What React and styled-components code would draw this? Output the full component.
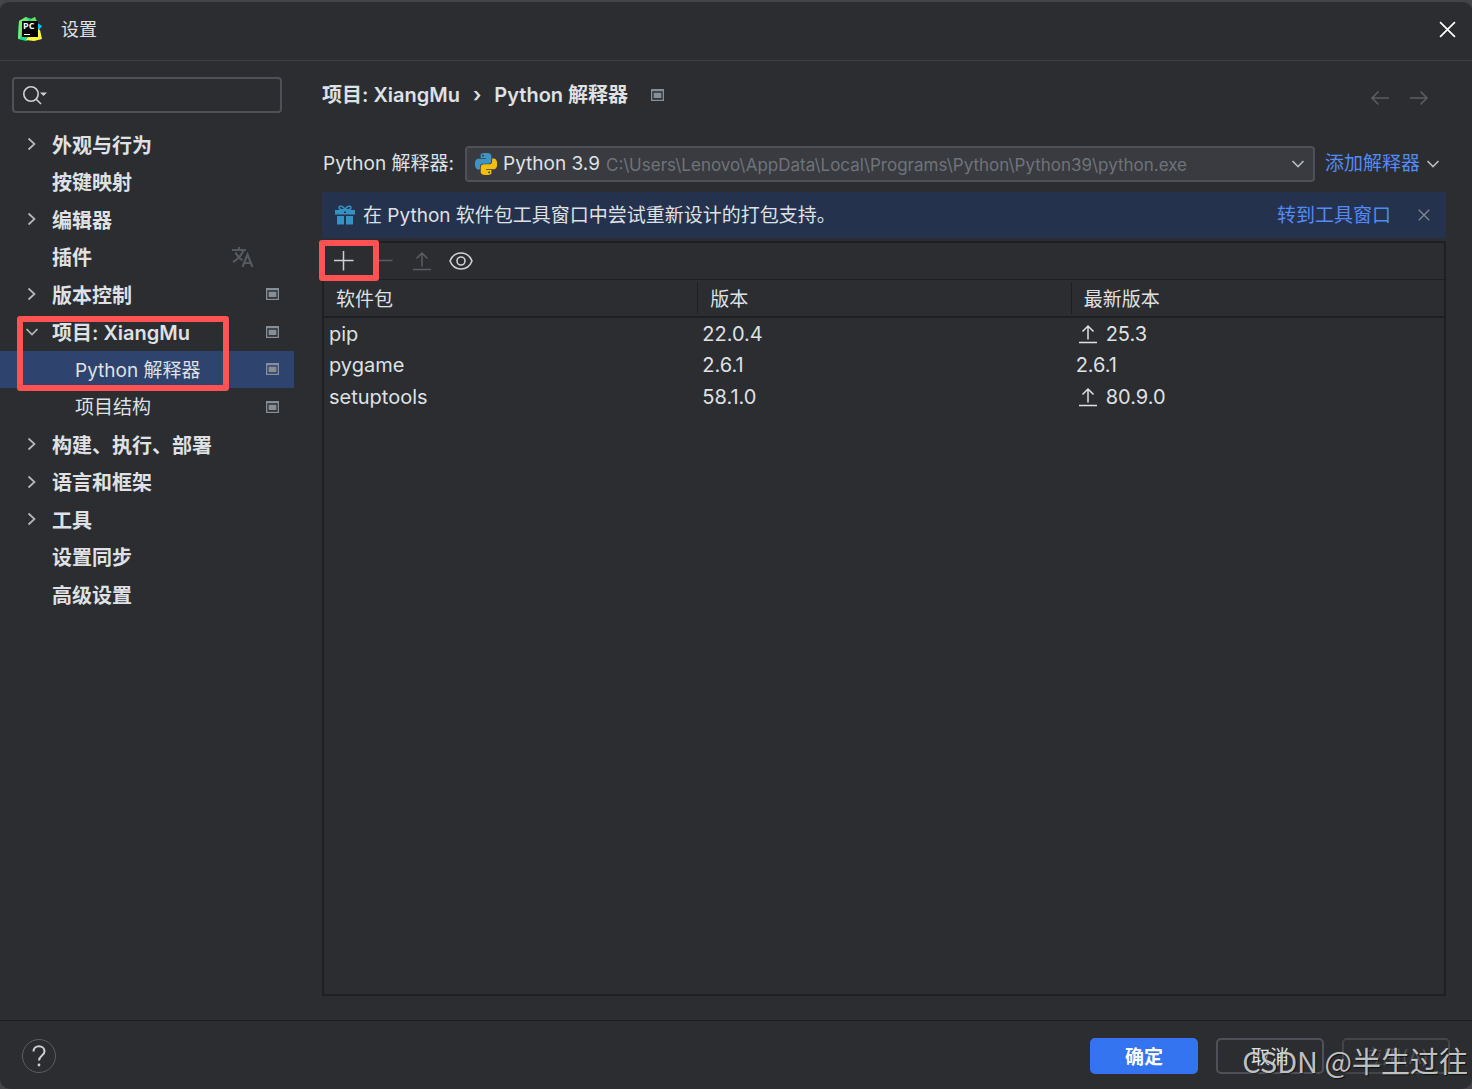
import { useState } from "react";
import styled, { createGlobalStyle } from "styled-components";

const GlobalStyle = createGlobalStyle`
  * {
    box-sizing: border-box;
  }
  body {
    margin: 0;
    background: #43454a;
    color: #dfe1e5;
    font-family: Inter, "Noto Sans CJK SC", sans-serif;
    font-size: 19px;
    line-height: 24px;
  }
  button, input, select {
    font: inherit;
    color: inherit;
  }
  button {
    padding: 0;
    border: 0;
    background: none;
  }
  svg {
    display: block;
    flex: none;
  }
`;

const Window = styled.div`
  position: relative;
  min-height: 100vh;
  display: flex;
  flex-direction: column;
  overflow: hidden;
  background: #2b2d30;
  border-top: 2px solid #43454a;
  border-radius: 10px;
`;

const TitleBar = styled.header`
  height: 59px;
  padding: 0 16px 4px 18px;
  display: flex;
  align-items: center;
  gap: 19px;
  border-bottom: 1px solid #3c3e42;
`;
const Title = styled.h1`
  flex: 1;
  margin: 0;
  padding-top: 2px;
  font-size: 18px;
  font-weight: 400;
`;

const Body = styled.div`
  flex: 1;
  display: grid;
  grid-template-columns: 294px 1fr;
`;

const Sidebar = styled.aside`
  position: relative;
  padding-top: 16px;
`;
const SearchBox = styled.label`
  height: 36px;
  margin: 0 12px 13px;
  padding-left: 9px;
  display: flex;
  align-items: center;
  border: 2px solid #4e5157;
  border-radius: 4px;
`;
const SearchInput = styled.input`
  flex: 1;
  min-width: 0;
  border: 0;
  outline: 0;
  background: none;
`;
const Tree = styled.ul`
  margin: 0;
  padding: 0;
  list-style: none;
`;
const TreeItem = styled.li`
  height: 37px;
  background: ${(props) => (props.$selected ? "#2e436e" : "none")};
  &:nth-child(even) {
    height: 38px;
  }
`;
const TreeButton = styled.button`
  width: 100%;
  height: 100%;
  padding: 0 15px 1px 25px;
  display: flex;
  align-items: center;
  text-align: left;
  font-size: ${(props) => (props.$child ? "19px" : "20px")};
  font-weight: ${(props) => (props.$child ? 400 : 600)};
`;
const ArrowSlot = styled.span`
  width: ${(props) => (props.$child ? "50px" : "27px")};
`;
const TreeLabel = styled.span`
  flex: 1;
  padding-top: 3px;
  white-space: nowrap;
`;
const TranslateSlot = styled.span`
  margin-right: 25px;
`;

// red marker frames drawn over the dialog
const Marker = styled.div`
  position: absolute;
  border: 6px solid #ff5252;
  border-radius: 3px;
  pointer-events: none;
`;
const TreeMarker = styled(Marker)`
  top: 255px;
  left: 17px;
  width: 212px;
  height: 75px;
`;
const AddMarker = styled(Marker)`
  top: -3px;
  left: -5px;
  width: 60px;
  height: 41px;
`;

const Main = styled.main`
  min-width: 0;
  padding: 0 26px 24px 28px;
  display: flex;
  flex-direction: column;
`;
const Breadcrumbs = styled.div`
  height: 68px;
  margin-bottom: 17px;
  padding-right: 17px;
  display: flex;
  align-items: center;
  font-size: 20px;
  font-weight: 600;
`;
const Crumb = styled.span`
  white-space: nowrap;
`;
const CrumbArrow = styled.span`
  margin: 0 13px;
`;
const CrumbIcon = styled.span`
  flex: 1;
  margin-left: 23px;
`;
const NavButtons = styled.div`
  display: flex;
  gap: 19px;
  padding-top: 6px;
`;

const InterpreterRow = styled.div`
  height: 36px;
  margin-bottom: 10px;
  display: flex;
  align-items: center;
`;
const InterpreterLabel = styled.label`
  width: 143px;
  padding-left: 1px;
  white-space: nowrap;
`;
const Combo = styled.div`
  flex: 1;
  min-width: 0;
  height: 36px;
  padding: 0 8px;
  display: flex;
  align-items: center;
  gap: 6px;
  background: #393b40;
  border: 2px solid #4e5157;
  border-radius: 4px;
`;
const ComboSelect = styled.select`
  padding: 0;
  border: 0;
  outline: 0;
  appearance: none;
  background: none;
  option {
    background: #2b2d30;
  }
`;
const ComboPath = styled.span`
  flex: 1;
  min-width: 0;
  padding-top: 2px;
  overflow: hidden;
  white-space: nowrap;
  color: #6f737a;
  font-size: 17px;
`;
const AddInterpreter = styled.button`
  width: 131px;
  padding-left: 10px;
  display: flex;
  align-items: center;
  gap: 6px;
  color: #548af7;
  white-space: nowrap;
`;

const Banner = styled.section`
  height: 46px;
  margin-bottom: 3px;
  padding: 0 16px 0 13px;
  display: flex;
  align-items: center;
  background: #25324d;
`;
const BannerText = styled.p`
  flex: 1;
  margin: 0 0 0 8px;
  padding-top: 2px;
`;
const BannerLink = styled.a`
  margin-right: 27px;
  padding-top: 2px;
  color: #548af7;
  text-decoration: none;
`;

const Panel = styled.section`
  flex: 1;
  border: 2px solid #1e1f22;
`;
const Toolbar = styled.div`
  position: relative;
  height: 37px;
  display: flex;
  align-items: center;
  border-bottom: 1px solid #1e1f22;
`;
const ToolButton = styled.button`
  width: 39px;
  height: 36px;
  display: flex;
  align-items: center;
  justify-content: center;
  color: ${(props) => (props.disabled ? "#5a5d63" : "#ced0d6")};
`;

const PackageTable = styled.table`
  width: 100%;
  table-layout: fixed;
  border-spacing: 0;
  text-align: left;
`;
const HeadCell = styled.th`
  height: 38px;
  padding: 0;
  border-bottom: 2px solid #1e1f22;
  font-weight: 400;
`;
const HeadLabel = styled.div`
  height: 32px;
  padding-left: 12px;
  line-height: 36px;
  border-left: ${(props) => (props.$first ? "0" : "1px solid #1e1f22")};
`;
const PackageRow = styled.tr`
  height: 31px;
  &:nth-child(odd) {
    height: 32px;
  }
`;
const Cell = styled.td`
  padding: 0 5px 1px;
  font-size: 20px;
`;
const Latest = styled.div`
  display: flex;
  align-items: center;
  gap: 6px;
`;

const Footer = styled.footer`
  height: 69px;
  padding: 2px 22px 0;
  display: flex;
  align-items: center;
  gap: 18px;
  border-top: 1px solid #1e1f22;
`;
const HelpButton = styled.button`
  width: 34px;
  height: 34px;
  margin-right: auto;
  display: flex;
  align-items: center;
  justify-content: center;
  border: 1px solid #5a5d63;
  border-radius: 50%;
`;
const DialogButton = styled.button`
  width: 108px;
  height: 36px;
  padding-top: 3px;
  border: 2px solid ${(props) => (props.$primary ? "#3574f0" : "#4e5157")};
  border-radius: 5px;
  background: ${(props) => (props.$primary ? "#3574f0" : "none")};
  color: ${(props) => (props.$primary ? "#ffffff" : "#dfe1e5")};
  font-weight: ${(props) => (props.$primary ? 600 : 400)};
  &:disabled {
    border-color: #43454a;
    color: #4e5157;
  }
`;
const Watermark = styled.div`
  position: absolute;
  right: 4px;
  bottom: 9px;
  color: rgba(215, 215, 215, 0.9);
  font-family: "Noto Sans CJK SC", sans-serif;
  font-size: 29px;
  line-height: 40px;
  text-shadow: 1px 1px 1px rgba(0, 0, 0, 0.6);
  white-space: nowrap;
  pointer-events: none;
`;

const PyCharmIcon = () => (
  <svg width="24" height="24" viewBox="0 0 24 24">
    <path d="M1 4 8 0l6 2 3-2 2 4-5 17-6 3-8-2z" fill="#21d789" />
    <path d="M1 4 8 0l2 4-6 9-2 9-2-1z" fill="#7fe86b" />
    <path d="M13 2l4-2 1 5-6 2z" fill="#6be05a" />
    <path d="M18 5l6 4-3 4-4-2z" fill="#07c3f2" />
    <path d="M19 12l3 1 2 9-8 2-8-1 4-6z" fill="#fcf84a" />
    <rect x="4" y="4" width="16" height="16" fill="#000" />
    <rect x="6" y="17" width="6" height="1" fill="#fff" />
    <text x="5" y="12" fill="#fff" fontFamily="Open Sans, sans-serif" fontWeight="700" fontSize="9">
      PC
    </text>
  </svg>
);

const PythonIcon = () => (
  <svg width="22" height="22" viewBox="0 0 24 24">
    <path
      fill="#3e94c4"
      d="M14.25.18l.9.2.73.26.59.3.45.32.34.34.25.34.16.33.1.3.04.26.02.2-.01.13V8.5l-.05.63-.13.55-.21.46-.26.38-.3.31-.33.25-.35.19-.35.14-.33.1-.3.07-.26.04-.21.02H8.77l-.69.05-.59.14-.5.22-.41.27-.33.32-.27.35-.2.36-.15.37-.1.35-.07.32-.04.27-.02.21v3.06H3.17l-.21-.03-.28-.07-.32-.12-.35-.18-.36-.26-.36-.36-.35-.46-.32-.59-.28-.73-.21-.88-.14-1.05-.05-1.23.06-1.22.16-1.04.24-.87.32-.71.36-.57.4-.44.42-.33.42-.24.4-.16.36-.1.32-.05.24-.01h.16l.06.01h8.16v-.83H6.18l-.01-2.75-.02-.37.05-.34.11-.31.17-.28.25-.26.31-.23.38-.2.44-.18.51-.15.58-.12.64-.1.71-.06.77-.04.84-.02 1.27.05zm-6.3 1.98l-.23.33-.08.41.08.41.23.34.33.22.41.09.41-.09.33-.22.23-.34.08-.41-.08-.41-.23-.33-.33-.22-.41-.09-.41.09z"
    />
    <path
      fill="#f2bf0c"
      d="M21.1 6.11l.28.06.32.12.35.18.36.27.36.35.35.47.32.59.28.73.21.88.14 1.04.05 1.23-.06 1.23-.16 1.04-.24.86-.32.71-.36.57-.4.45-.42.33-.42.24-.4.16-.36.09-.32.05-.24.02-.16-.01h-8.22v.82h5.84l.01 2.76.02.36-.05.34-.11.31-.17.29-.25.25-.31.24-.38.2-.44.17-.51.15-.58.13-.64.09-.71.07-.77.04-.84.01-1.27-.04-1.07-.14-.9-.2-.73-.25-.59-.3-.45-.33-.34-.34-.25-.34-.16-.33-.1-.3-.04-.25-.02-.2.01-.13v-5.34l.05-.64.13-.54.21-.46.26-.38.3-.32.33-.24.35-.2.35-.14.33-.1.3-.06.26-.04.21-.02.13-.01h5.84l.69-.05.59-.14.5-.21.41-.28.33-.32.27-.35.2-.36.15-.36.1-.35.07-.32.04-.28.02-.21V6.07h2.09l.14.01zm-6.47 14.25l-.23.33-.08.41.08.41.23.33.33.23.41.08.41-.08.33-.23.23-.33.08-.41-.08-.41-.23-.33-.33-.23-.41-.08-.41.08z"
    />
  </svg>
);

const SearchIcon = () => (
  <svg width="25" height="20" viewBox="0 0 25 20" fill="none" stroke="#ced0d6" strokeWidth="1.6">
    <circle cx="8" cy="9" r="7.2" />
    <path d="M13 14l5 5" />
    <path d="M17 7.500h7l-3.500 3.500z" fill="#ced0d6" stroke="none" />
  </svg>
);

const CloseIcon = ({ size, color }) => (
  <svg width={size} height={size} viewBox="0 0 16 16" fill="none" stroke={color} strokeWidth="1.6">
    <path d="M1 1l14 14M15 1L1 15" />
  </svg>
);

const ChevronRight = () => (
  <svg width="14" height="14" viewBox="0 0 14 14" fill="none" stroke="#b4b8bf" strokeWidth="1.700">
    <path d="M3.500 1.500L9.500 7l-6 5.500" />
  </svg>
);

const ChevronDown = () => (
  <svg width="14" height="14" viewBox="0 0 14 14" fill="none" stroke="#b4b8bf" strokeWidth="1.700">
    <path d="M1.500 4L7 9.500 12.500 4" />
  </svg>
);

const TranslateIcon = () => (
  <svg width="22" height="20" viewBox="0 0 22 20" fill="none" stroke="#565a60" strokeWidth="2.200">
    <path d="M0 3h14M7 0v3M11.500 3C10 8 5 13 1 15M3.500 5.500C5 9 8 11.500 10.500 13.500" />
    <path d="M10.500 20l5-12.500 5 12.500M12 16h7" />
  </svg>
);

const ProjectIcon = () => (
  <svg width="13" height="12" viewBox="0 0 13 12">
    <path fillRule="evenodd" fill="#868e97" d="M0 0h13v12H0zM1.300 2.300v8.400h10.400V2.300z" />
    <rect x="2.600" y="3.700" width="7.800" height="5.400" fill="#868e97" />
  </svg>
);

const NavArrow = ({ back }) => (
  <svg width="20" height="16" viewBox="0 0 20 16" fill="none" stroke="#5a5d63" strokeWidth="1.600">
    <path d={back ? "M19 8H2M8.500 1.500L2 8l6.500 6.500" : "M1 8h17M11.500 1.500L18 8l-6.500 6.500"} />
  </svg>
);

const GiftIcon = () => (
  <svg width="20" height="20" viewBox="0 0 20 20" fill="#3592c4">
    <path d="M0 5h20v4.500H0zM2 11h7v8.500H2zM11 11h7v8.500h-7z" />
    <path d="M9 6.500h2V8H9z" fill="#25324d" />
    <path
      d="M10 4.500C8.500 1 4 0 4 2.800c0 2 3 2.200 6 1.700zM10 4.500C11.500 1 16 0 16 2.800c0 2-3 2.200-6 1.700z"
      fill="none"
      stroke="#3592c4"
      strokeWidth="1.500"
    />
  </svg>
);

const PlusIcon = () => (
  <svg width="20" height="20" viewBox="0 0 20 20" stroke="currentColor" strokeWidth="1.500">
    <path d="M0 9.500h19.500M9.500 0v19.500" />
  </svg>
);

const MinusIcon = () => (
  <svg width="20" height="20" viewBox="0 0 20 20" stroke="currentColor" strokeWidth="1.500">
    <path d="M0 9.500h19.500" />
  </svg>
);

const UpgradeIcon = () => (
  <svg width="24" height="20" viewBox="0 0 24 20" fill="none" stroke="currentColor" strokeWidth="1.500">
    <path d="M3 18.500h18M12 15.500V2M6.500 7.500L12 2l5.500 5.500" />
  </svg>
);

const EyeIcon = () => (
  <svg width="24" height="18" viewBox="0 0 24 18" fill="none" stroke="currentColor" strokeWidth="1.600">
    <path d="M1 9c2-5 6-8 11-8s9 3 11 8c-2 5-6 8-11 8S3 14 1 9z" />
    <circle cx="12" cy="9" r="4" />
  </svg>
);

const HelpIcon = () => (
  <svg width="14" height="24" viewBox="0 0 14 24" fill="none" stroke="#ced0d6" strokeWidth="2">
    <path d="M1.500 7.500c0-7 11-7 11 0 0 4-5.500 4-5.500 9" />
    <circle cx="7" cy="21" r="1.400" fill="#ced0d6" stroke="none" />
  </svg>
);

const treeItems = [
  { name: "外观与行为", arrow: "right" },
  { name: "按键映射" },
  { name: "编辑器", arrow: "right" },
  { name: "插件", translate: true },
  { name: "版本控制", arrow: "right", project: true },
  { name: "项目: XiangMu", arrow: "down", project: true },
  { name: "Python 解释器", child: true, project: true },
  { name: "项目结构", child: true, project: true },
  { name: "构建、执行、部署", arrow: "right" },
  { name: "语言和框架", arrow: "right" },
  { name: "工具", arrow: "right" },
  { name: "设置同步" },
  { name: "高级设置" },
];

const packages = [
  { name: "pip", version: "22.0.4", latest: "25.3", upgrade: true },
  { name: "pygame", version: "2.6.1", latest: "2.6.1" },
  { name: "setuptools", version: "58.1.0", latest: "80.9.0", upgrade: true },
];

function SettingsTree() {
  const [selected, setSelected] = useState("Python 解释器");

  return (
    <Tree>
      {treeItems.map((item) => (
        <TreeItem key={item.name} $selected={item.name === selected}>
          <TreeButton $child={item.child} onClick={() => setSelected(item.name)}>
            <ArrowSlot $child={item.child}>
              {item.arrow === "right" && <ChevronRight />}
              {item.arrow === "down" && <ChevronDown />}
            </ArrowSlot>
            <TreeLabel>{item.name}</TreeLabel>
            {item.translate && (
              <TranslateSlot>
                <TranslateIcon />
              </TranslateSlot>
            )}
            {item.project && <ProjectIcon />}
          </TreeButton>
        </TreeItem>
      ))}
    </Tree>
  );
}

function PackagePanel() {
  return (
    <Panel>
      <Toolbar>
        <ToolButton aria-label="安装">
          <PlusIcon />
        </ToolButton>
        <ToolButton aria-label="卸载" disabled>
          <MinusIcon />
        </ToolButton>
        <ToolButton aria-label="升级" disabled>
          <UpgradeIcon />
        </ToolButton>
        <ToolButton aria-label="显示早期版本">
          <EyeIcon />
        </ToolButton>
        <AddMarker />
      </Toolbar>
      <PackageTable>
        <thead>
          <tr>
            <HeadCell>
              <HeadLabel $first>软件包</HeadLabel>
            </HeadCell>
            <HeadCell>
              <HeadLabel>版本</HeadLabel>
            </HeadCell>
            <HeadCell>
              <HeadLabel>最新版本</HeadLabel>
            </HeadCell>
          </tr>
        </thead>
        <tbody>
          {packages.map((item) => (
            <PackageRow key={item.name}>
              <Cell>{item.name}</Cell>
              <Cell>{item.version}</Cell>
              <Cell>
                <Latest>
                  {item.upgrade && <UpgradeIcon />}
                  {item.latest}
                </Latest>
              </Cell>
            </PackageRow>
          ))}
        </tbody>
      </PackageTable>
    </Panel>
  );
}

function App() {
  return (
    <>
      <GlobalStyle />
      <Window>
        <TitleBar>
          <PyCharmIcon />
          <Title>设置</Title>
          <button aria-label="关闭">
            <CloseIcon size={17} color="#ffffff" />
          </button>
        </TitleBar>
        <Body>
          <Sidebar>
            <SearchBox>
              <SearchIcon />
              <SearchInput type="text" aria-label="搜索" />
            </SearchBox>
            <SettingsTree />
            <TreeMarker />
          </Sidebar>
          <Main>
            <Breadcrumbs>
              <Crumb>项目: XiangMu</Crumb>
              <CrumbArrow>›</CrumbArrow>
              <Crumb>Python 解释器</Crumb>
              <CrumbIcon>
                <ProjectIcon />
              </CrumbIcon>
              <NavButtons>
                <button aria-label="后退">
                  <NavArrow back />
                </button>
                <button aria-label="前进">
                  <NavArrow />
                </button>
              </NavButtons>
            </Breadcrumbs>
            <InterpreterRow>
              <InterpreterLabel htmlFor="interpreter">Python 解释器:</InterpreterLabel>
              <Combo>
                <PythonIcon />
                <ComboSelect id="interpreter">
                  <option>Python 3.9</option>
                </ComboSelect>
                <ComboPath>
                  {"C:\\Users\\Lenovo\\AppData\\Local\\Programs\\Python\\Python39\\python.exe"}
                </ComboPath>
                <ChevronDown />
              </Combo>
              <AddInterpreter>
                添加解释器
                <ChevronDown />
              </AddInterpreter>
            </InterpreterRow>
            <Banner>
              <GiftIcon />
              <BannerText>在 Python 软件包工具窗口中尝试重新设计的打包支持。</BannerText>
              <BannerLink href="#packages">转到工具窗口</BannerLink>
              <button aria-label="关闭提示">
                <CloseIcon size={12} color="#868a91" />
              </button>
            </Banner>
            <PackagePanel />
          </Main>
        </Body>
        <Footer>
          <HelpButton aria-label="帮助">
            <HelpIcon />
          </HelpButton>
          <DialogButton $primary>确定</DialogButton>
          <DialogButton>取消</DialogButton>
          <DialogButton disabled>应用(A)</DialogButton>
        </Footer>
        <Watermark>CSDN @半生过往</Watermark>
      </Window>
    </>
  );
}

export default App;
